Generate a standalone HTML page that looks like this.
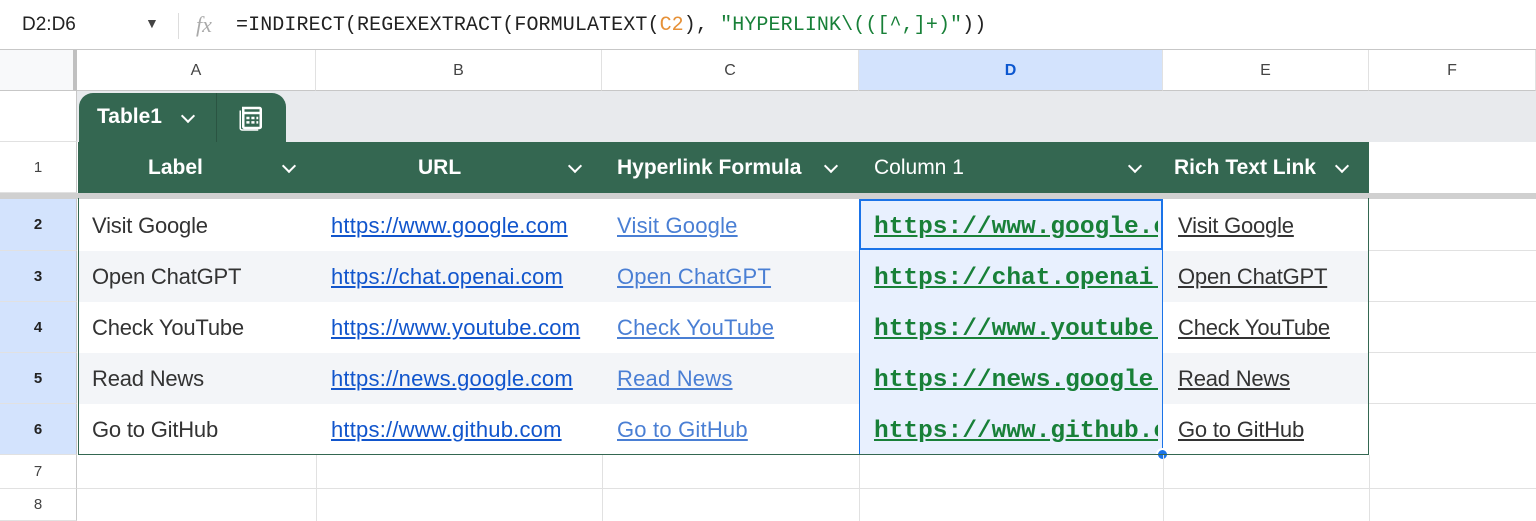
<!DOCTYPE html>
<html><head><style>
body{margin:0;width:1536px;height:521px;overflow:hidden;background:#fff;font-family:"Liberation Sans",Arial,sans-serif;position:relative}
.a{position:absolute;box-sizing:border-box}
.t{position:absolute;white-space:nowrap}
.ch{font-size:16px;color:#444;text-align:center;top:50px;height:41px;line-height:41px;border-right:1px solid #e1e1e1;border-bottom:1px solid #c7c7c7}
.rn{left:0;width:77px;text-align:center;font-size:15px;color:#444;border-right:1px solid #c7c7c7;border-bottom:1px solid #e1e1e1}
.hd{color:#fff;font-size:21px;font-weight:bold;top:142px;height:51px;line-height:51px}
.cell{font-size:22px;color:#333;line-height:51px;letter-spacing:-0.2px}
.lk{color:#1155cc;text-decoration:underline;letter-spacing:0.2px}
.mono{font-family:"Liberation Mono",monospace;font-weight:bold;color:#188038;text-decoration:underline;font-size:24.5px;letter-spacing:0;line-height:55px}
.chev{position:absolute;width:8px;height:8px;border-right:2px solid #fff;border-bottom:2px solid #fff;transform:rotate(45deg)}
</style></head><body>
<div class="t" style="left:22px;top:14px;font-size:19px;color:#222">D2:D6</div>
<div class="t" style="left:145px;top:15px;font-size:14px;color:#444">▼</div>
<div class="a" style="left:178px;top:13px;width:1px;height:26px;background:#ddd"></div>
<div class="t" style="left:196px;top:12px;font-size:22px;color:#aaa;font-family:'Liberation Serif',serif;font-style:italic">fx</div>
<div class="t" style="left:236px;top:14px;font-size:20px;color:#222;font-family:'Liberation Mono',monospace;letter-spacing:0.1px">=INDIRECT(REGEXEXTRACT(FORMULATEXT(<span style="color:#e69138">C2</span>), <span style="color:#188038">"HYPERLINK\(([^,]+)"</span>))</div>
<div class="a" style="left:0;top:49px;width:1536px;height:1px;background:#c7c7c7"></div>
<div class="a" style="left:0;top:50px;width:77px;height:41px;background:#f8f9fa;border-right:4px solid #c0c0c0;border-bottom:1px solid #c7c7c7"></div>
<div class="a ch" style="left:77px;width:239px">A</div>
<div class="a ch" style="left:316px;width:286px">B</div>
<div class="a ch" style="left:602px;width:257px">C</div>
<div class="a ch" style="left:859px;width:304px;background:#d3e3fd;color:#0b57d0;font-weight:bold">D</div>
<div class="a ch" style="left:1163px;width:206px">E</div>
<div class="a ch" style="left:1369px;width:167px">F</div>
<div class="a" style="left:77px;top:91px;width:1459px;height:51px;background:#e8eaed"></div>
<div class="a rn" style="top:91px;height:51px"></div>
<div class="a" style="left:79px;top:93px;width:207px;height:50px;background:#346751;border-radius:14px 14px 0 0"></div>
<div class="t" style="left:97px;top:105px;font-size:21px;font-weight:bold;color:#fff">Table1</div>
<div class="chev" style="left:183px;top:111px"></div>
<div class="a" style="left:216px;top:93px;width:1px;height:49px;background:#2a5442"></div>
<svg class="a" style="left:237px;top:103px" width="30" height="30" viewBox="0 0 24 24" fill="#fff"><path d="M4 3h14a2 2 0 0 1 2 2v14a2 2 0 0 1-2 2H6a2 2 0 0 1-2-2zM6 5v2h12V5zm0 4v10h12V9zM7.5 11h2.5v2H7.5zm4 0h2.5v2h-2.5zm4 0H17v2h-1.5zM7.5 14.5h2.5v2H7.5zm4 0h2.5v2h-2.5zm4 0H17v2h-1.5z"/><path d="M2 6h1.2v14a1 1 0 0 0 1 1H17v1.2H4a2 2 0 0 1-2-2z"/></svg>
<div class="a rn" style="top:142px;height:51px;line-height:51px">1</div>
<div class="a" style="left:78px;top:142px;width:1291px;height:51px;background:#346751"></div>
<div class="t hd" style="left:148px">Label</div><div class="chev" style="left:284px;top:161px"></div>
<div class="t hd" style="left:418px">URL</div><div class="chev" style="left:570px;top:161px"></div>
<div class="t hd" style="left:617px">Hyperlink Formula</div><div class="chev" style="left:826px;top:161px"></div>
<div class="t hd" style="left:874px;font-weight:normal">Column 1</div><div class="chev" style="left:1130px;top:161px"></div>
<div class="t hd" style="left:1174px">Rich Text Link</div><div class="chev" style="left:1337px;top:161px"></div>
<div class="a" style="left:0;top:193px;width:1536px;height:6px;background:#d0d0d0"></div>
<div class="a" style="left:78px;top:251px;width:1291px;height:51px;background:#f3f5f8"></div>
<div class="a" style="left:78px;top:353px;width:1291px;height:51px;background:#f3f5f8"></div>
<div class="a" style="left:859px;top:199px;width:304px;height:256px;background:#e8f0fe;border:1px solid #1a73e8"></div>
<div class="a" style="left:859px;top:199px;width:304px;height:51px;border:2px solid #1a73e8;background:#e8f0fe"></div>
<div class="a" style="left:1156px;top:448px;width:13px;height:13px;border-radius:50%;background:#1a73e8;border:2px solid #fff"></div>
<div class="a" style="left:78px;top:198px;width:1px;height:257px;background:#346751"></div>
<div class="a" style="left:1368px;top:198px;width:1px;height:257px;background:#346751"></div>
<div class="a" style="left:78px;top:454px;width:1291px;height:1px;background:#346751"></div>
<div class="a" style="left:1369px;top:250px;width:167px;height:1px;background:#e1e1e1"></div>
<div class="a" style="left:1369px;top:301px;width:167px;height:1px;background:#e1e1e1"></div>
<div class="a" style="left:1369px;top:352px;width:167px;height:1px;background:#e1e1e1"></div>
<div class="a" style="left:1369px;top:403px;width:167px;height:1px;background:#e1e1e1"></div>
<div class="a" style="left:1369px;top:488px;width:167px;height:1px;background:#e1e1e1"></div>
<div class="a" style="left:77px;top:455px;width:1292px;height:66px;background:linear-gradient(#e1e1e1,#e1e1e1) 0 33px/100% 1px no-repeat"></div>
<div class="a" style="left:316px;top:455px;width:1px;height:66px;background:#e1e1e1"></div>
<div class="a" style="left:602px;top:455px;width:1px;height:66px;background:#e1e1e1"></div>
<div class="a" style="left:859px;top:455px;width:1px;height:66px;background:#e1e1e1"></div>
<div class="a" style="left:1163px;top:455px;width:1px;height:66px;background:#e1e1e1"></div>
<div class="a" style="left:1369px;top:455px;width:1px;height:66px;background:#e1e1e1"></div>

<div class="a rn" style="top:199px;height:52px;line-height:52px;background:#d3e3fd;font-weight:bold;color:#222">2</div>
<div class="a rn" style="top:251px;height:51px;line-height:51px;background:#d3e3fd;font-weight:bold;color:#222">3</div>
<div class="a rn" style="top:302px;height:51px;line-height:51px;background:#d3e3fd;font-weight:bold;color:#222">4</div>
<div class="a rn" style="top:353px;height:51px;line-height:51px;background:#d3e3fd;font-weight:bold;color:#222">5</div>
<div class="a rn" style="top:404px;height:51px;line-height:51px;background:#d3e3fd;font-weight:bold;color:#222">6</div>
<div class="a rn" style="top:455px;height:34px;line-height:34px">7</div>
<div class="a rn" style="top:489px;height:32px;line-height:32px">8</div>

<div style="position:absolute;left:0;top:200px">
<div class="t cell" style="left:92px;top:0">Visit Google</div>
<div class="t cell lk" style="left:331px;top:0">https://www.google.com</div>
<div class="t cell lk" style="left:617px;top:0;color:#4a7fd4">Visit Google</div>
<div class="t cell mono" style="left:874px;top:0;width:284px;overflow:hidden">https://www.google.com</div>
<div class="t cell" style="left:1178px;top:0;text-decoration:underline">Visit Google</div>

<div class="t cell" style="left:92px;top:51px">Open ChatGPT</div>
<div class="t cell lk" style="left:331px;top:51px">https://chat.openai.com</div>
<div class="t cell lk" style="left:617px;top:51px;color:#4a7fd4">Open ChatGPT</div>
<div class="t cell mono" style="left:874px;top:51px;width:284px;overflow:hidden">https://chat.openai.com</div>
<div class="t cell" style="left:1178px;top:51px;text-decoration:underline">Open ChatGPT</div>

<div class="t cell" style="left:92px;top:102px">Check YouTube</div>
<div class="t cell lk" style="left:331px;top:102px">https://www.youtube.com</div>
<div class="t cell lk" style="left:617px;top:102px;color:#4a7fd4">Check YouTube</div>
<div class="t cell mono" style="left:874px;top:102px;width:284px;overflow:hidden">https://www.youtube.com</div>
<div class="t cell" style="left:1178px;top:102px;text-decoration:underline">Check YouTube</div>

<div class="t cell" style="left:92px;top:153px">Read News</div>
<div class="t cell lk" style="left:331px;top:153px">https://news.google.com</div>
<div class="t cell lk" style="left:617px;top:153px;color:#4a7fd4">Read News</div>
<div class="t cell mono" style="left:874px;top:153px;width:284px;overflow:hidden">https://news.google.com</div>
<div class="t cell" style="left:1178px;top:153px;text-decoration:underline">Read News</div>

<div class="t cell" style="left:92px;top:204px">Go to GitHub</div>
<div class="t cell lk" style="left:331px;top:204px">https://www.github.com</div>
<div class="t cell lk" style="left:617px;top:204px;color:#4a7fd4">Go to GitHub</div>
<div class="t cell mono" style="left:874px;top:204px;width:284px;overflow:hidden">https://www.github.com</div>
<div class="t cell" style="left:1178px;top:204px;text-decoration:underline">Go to GitHub</div>
</div>
</body></html>
